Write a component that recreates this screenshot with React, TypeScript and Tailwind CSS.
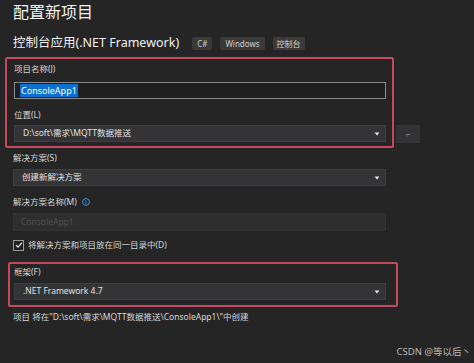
import React from "react";

const Chevron = () => (
  <svg width="6" height="4" viewBox="0 0 6 4" className="shrink-0">
    <path d="M0.5 0.5 L5.5 0.5 L3 3.5 Z" fill="#e8e8e8" />
  </svg>
);

const Dropdown = ({ text, w }: { text: string; w: string }) => (
  <div className={`${w} h-[17px] bg-[#343436] border border-[#3e3e40] flex items-center justify-between pl-[8px] pr-[5px]`}>
    <span className="text-[8.5px] leading-none text-[#e0e0e0]">{text}</span>
    <Chevron />
  </div>
);

export default function App() {
  return (
    <div className="w-[474px] h-[363px] bg-[#252526] overflow-hidden relative pl-[13px] font-['Noto_Sans','Noto_Sans_CJK_SC',sans-serif] text-[#d6d6d6]">
      <div className="h-[24px] leading-[24px] text-[16px] text-[#f2f2f2]">配置新项目</div>
      <div className="mt-[12px] h-[14px] flex items-center">
        <span className="text-[12.5px] leading-[14px] text-[#f0f0f0]">控制台应用(.NET Framework)</span>
        <span className="ml-[13px] h-[13px] px-[5px] bg-[#3a3a3a] rounded-[2px] text-[8px] leading-[13px] text-[#cfcfcf]">C#</span>
        <span className="ml-[8px] h-[13px] px-[5px] bg-[#3a3a3a] rounded-[2px] text-[8px] leading-[13px] text-[#cfcfcf]">Windows</span>
        <span className="ml-[8px] h-[13px] px-[4px] bg-[#3a3a3a] rounded-[2px] text-[8px] leading-[13px] text-[#cfcfcf]">控制台</span>
      </div>

      <div className="flex items-end mt-[7px] -ml-[8px]">
        <div className="w-[389px] border-2 border-[#c6485f] rounded-[2px] pl-[7px] pb-[4px]">
          <div className="h-[20px] leading-[20px] text-[8.5px]">项目名称(J)</div>
          <div className="mt-[3px] w-[372px] h-[17px] border border-[#8a8a8a] bg-[#1f1f1f] flex items-center pl-[5px]">
            <span className="bg-[#0f6fd1] text-white text-[9px] leading-[13px] px-[1px]">ConsoleApp1</span>
          </div>
          <div className="mt-[8px] h-[16px] leading-[16px] text-[8.5px]">位置(L)</div>
          <div className="mt-[2px]">
            <Dropdown text="D:\soft\需求\MQTT数据推送" w="w-[372px]" />
          </div>
        </div>
        <div className="ml-[2px] mb-[5px] w-[24px] h-[18px] bg-[#333335] flex items-center justify-center text-[7px] leading-none text-[#bdbdbd]">
          ⌐
        </div>
      </div>

      <div className="mt-[2px] h-[16px] leading-[16px] text-[8.5px]">解决方案(S)</div>
      <div className="mt-[3px]">
        <Dropdown text="创建新解决方案" w="w-[373px]" />
      </div>

      <div className="mt-[8px] h-[16px] flex items-center">
        <span className="text-[8.5px] leading-[16px]">解决方案名称(M)</span>
        <svg width="8" height="8" viewBox="0 0 8 8" className="ml-[5px]">
          <circle cx="4" cy="4" r="3.4" fill="none" stroke="#3c8fe0" strokeWidth="1" />
          <rect x="3.55" y="3.3" width="0.9" height="2.6" fill="#3c8fe0" />
          <rect x="3.55" y="1.9" width="0.9" height="0.9" fill="#3c8fe0" />
        </svg>
      </div>
      <div className="mt-[3px] w-[373px] h-[18px] bg-[#2e2e2f] border border-[#333335] flex items-center pl-[7px]">
        <span className="text-[8.5px] leading-none text-[#4e4e50]">ConsoleApp1</span>
      </div>

      <div className="mt-[8px] h-[12px] flex items-center">
        <div className="w-[11px] h-[11px] border border-[#9a9a9a] bg-[#1f1f1f] flex items-center justify-center">
          <svg width="8" height="8" viewBox="0 0 8 8">
            <path d="M1 4.2 L3 6.2 L7 1.6" fill="none" stroke="#f0f0f0" strokeWidth="1.2" />
          </svg>
        </div>
        <span className="ml-[4px] text-[8.5px] leading-[12px]">将解决方案和项目放在同一目录中(D)</span>
      </div>

      <div className="mt-[11px] -ml-[5px] w-[390px] border-2 border-[#c6485f] rounded-[2px] pl-[4px] pb-[5px]">
        <div className="h-[16px] leading-[16px] text-[8.5px]">框架(F)</div>
        <div className="mt-[3px]">
          <Dropdown text=".NET Framework 4.7" w="w-[372px]" />
        </div>
      </div>

      <div className="mt-[2px] h-[16px] leading-[16px] text-[8.5px]">
        项目 将在"D:\soft\需求\MQTT数据推送\ConsoleApp1\"中创建
      </div>

      <div className="absolute right-[3px] bottom-[4px] text-[9.5px] leading-[14px] text-[#b8b8b8]">
        CSDN @等以后丶
      </div>
    </div>
  );
}
